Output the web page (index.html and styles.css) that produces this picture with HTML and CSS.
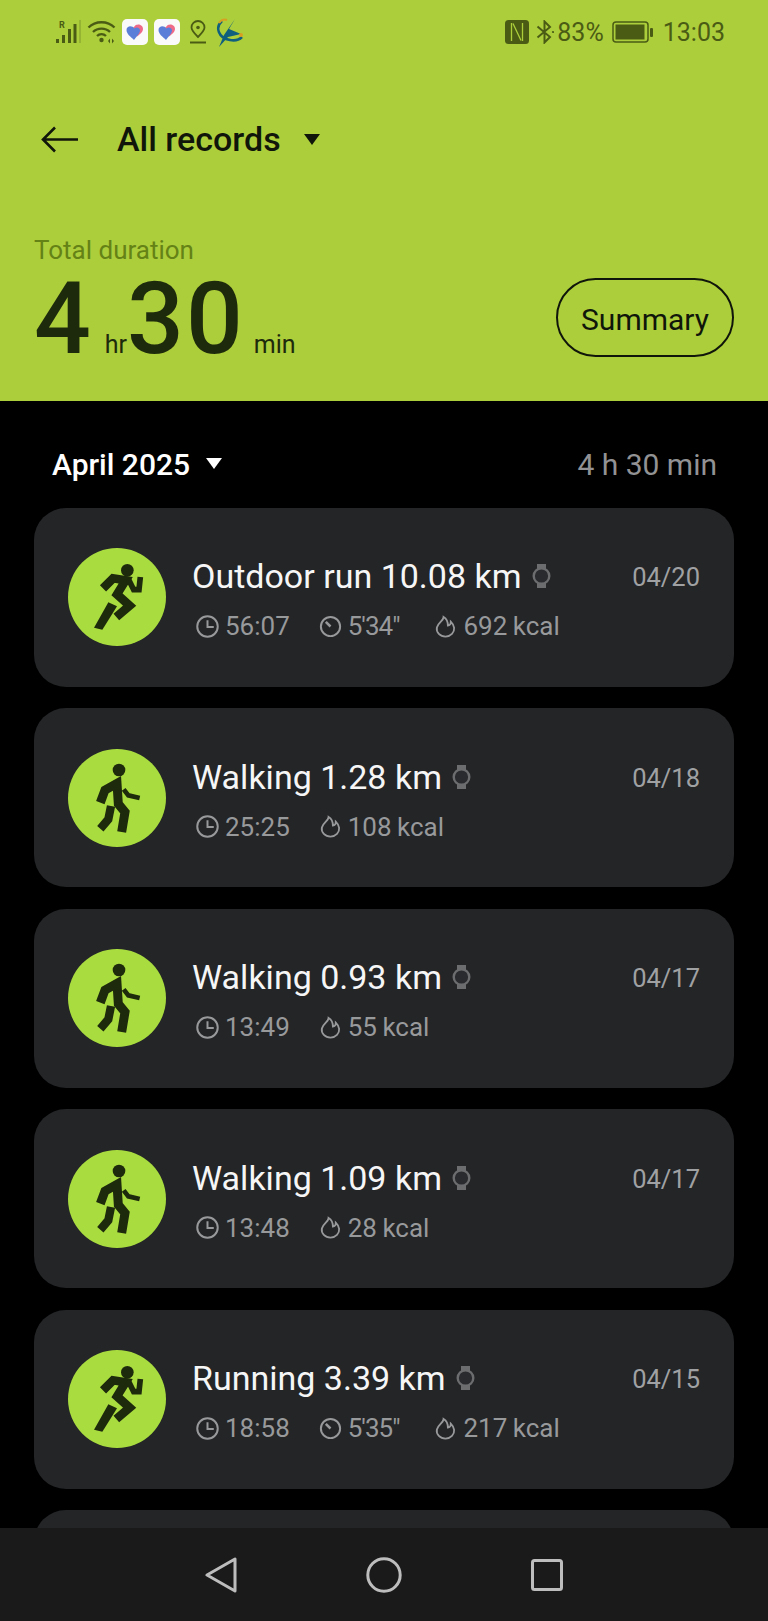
FILE: index.html
```html
<!DOCTYPE html>
<html lang="en">
<head>
  <meta charset="UTF-8">
  <meta name="viewport" content="width=device-width, initial-scale=1.0">
  <title>All records</title>
  <link rel="stylesheet" href="styles.css">
</head>
<body>
  <svg class="icon-defs" width="0" height="0">
    <symbol id="runner" viewBox="7 7 330 330">
      <circle cx="203" cy="92" r="19" fill="#1e2a0c"/>
      <g fill="none" stroke="#1e2a0c" stroke-width="26">
        <path d="M130 146 L160 116 L198 122 L172 164 L210 198 L170 232"/>
        <path d="M206 118 L222 150 L238 150 L242 112" stroke-width="17"/>
      </g>
      <path d="M146 188 L172 200 L128 270 L103 264 Z" fill="#1e2a0c"/>
    </symbol>
    <symbol id="walker" viewBox="7 7 330 330">
      <circle cx="178" cy="88" r="19" fill="#1e2a0c"/>
      <g fill="none" stroke="#1e2a0c" stroke-width="27">
        <path d="M122 186 L136 148 L172 128 L176 190 L196 214 L186 274"/>
        <path d="M192 146 L206 164 L240 172" stroke-width="14"/>
        <path d="M154 196 L146 236 L122 264" stroke-width="25"/>
      </g>
    </symbol>
    <symbol id="clock" viewBox="0 0 22 22">
      <circle cx="11" cy="11" r="9.8" fill="none" stroke="currentColor" stroke-width="1.900"/>
      <path d="M11 5 V11.5 H17" fill="none" stroke="currentColor" stroke-width="1.900"/>
    </symbol>
    <symbol id="pace" viewBox="0 0 22 22">
      <circle cx="11" cy="11" r="9.2" fill="none" stroke="currentColor" stroke-width="1.900"/>
      <path d="M6.5 6.5 L11 11" fill="none" stroke="currentColor" stroke-width="2.400"/>
    </symbol>
    <symbol id="flame" viewBox="0 0 22 24">
      <path d="M9 2 C9 6 3 8 2 13 C1 18 5.500 22.500 11 22.500 C16.500 22.500 20.500 18 20 13.500 C19.700 10.500 18 8.500 16.500 7 C16.500 9.500 15.500 11 13.500 11 C13.500 7.500 12.500 4 9 2 Z" fill="none" stroke="currentColor" stroke-width="1.900"/>
    </symbol>
    <symbol id="watch" viewBox="0 0 19 26">
      <path d="M5 1 H14 V6 H5 Z M5 20 H14 V25 H5 Z" fill="#6c6d6f"/>
      <circle cx="9.500" cy="13" r="7.800" fill="#2a2b2e" stroke="#6c6d6f" stroke-width="2.400"/>
    </symbol>
    <symbol id="heart-tile" viewBox="0 0 26 26">
      <rect width="26" height="26" rx="5" fill="#fafafa"/>
      <path d="M12 8 C14 4 21 5 21 10 C21 13 17.500 15.500 15 17.500 L10 10 Z" fill="#ee6a88"/>
      <path d="M4.500 11 C4.500 7 10 6 12.500 9.500 C14 7.500 18.500 8.500 18 12 C17.500 15 14 18 12 21 C9 18 4.500 15 4.500 11 Z" fill="#5b7fd9"/>
    </symbol>
  </svg>

  <div class="phone">
    <header class="top">
      <div class="status-bar">
        <div class="status-left">
          <svg width="26" height="26" viewBox="0 0 26 26">
            <text x="4" y="9" class="roam">R</text>
            <path d="M1 20 h3 v4 h-3 Z M7 16 h3 v8 h-3 Z M13 10 h3 v14 h-3 Z M18.500 5 h3 v19 h-3 Z" fill="#4a5c14"/>
            <path d="M25 1 V24" stroke="#7f9a2a" stroke-width="1"/>
          </svg>
          <svg width="29" height="26" viewBox="0 0 29 26">
            <path d="M1.500 8.500 C8.500 1.500 20.500 1.500 27.500 8.500 M6 13 C10.500 8.500 18.500 8.500 23 13 M10 17 C12.500 14.500 16.500 14.500 19 17" fill="none" stroke="#4a5c14" stroke-width="2.300"/>
            <circle cx="14.500" cy="21" r="2.200" fill="#4a5c14"/>
            <path d="M21 22 l2 -2.500 v5 Z M27 22 l-2 -2.500 v5 Z" fill="#4a5c14"/>
          </svg>
          <svg class="tile" width="26" height="26"><use href="#heart-tile"/></svg>
          <svg class="tile" width="26" height="26"><use href="#heart-tile"/></svg>
          <svg class="pin" width="16" height="24" viewBox="0 0 16 24">
            <path d="M8 17 C4 13 1.500 10.500 1.500 7.500 A6.500 6.500 0 0 1 14.500 7.500 C14.500 10.500 12 13 8 17 Z" fill="none" stroke="#4a5c14" stroke-width="1.800"/>
            <circle cx="8" cy="7.500" r="1.800" fill="#4a5c14"/>
            <path d="M0 22.500 H16" stroke="#4a5c14" stroke-width="2"/>
          </svg>
          <svg width="28" height="29" viewBox="0 0 28 29">
            <path d="M19 1 L13 11 L25 16 L12 19 L3 29 L8 17 Z" fill="#0f5f7e"/>
            <path d="M6 3 C-1 9 2 20 14 22 C19 23 23 22 26 19" fill="none" stroke="#0f5f7e" stroke-width="2.500"/>
            <path d="M3 5 C5 2 8 1 11 2" fill="none" stroke="#d8a021" stroke-width="2"/>
            <circle cx="25" cy="17" r="2" fill="#d8a021"/>
          </svg>
        </div>
        <div class="status-right">
          <svg width="24" height="24" viewBox="0 0 24 24">
            <rect width="24" height="24" rx="3.500" fill="#4a5c14"/>
            <path d="M6.500 3 V21 M17.500 3 V21 M8 3.500 L16 20.500" fill="none" stroke="#adce3b" stroke-width="1.300"/>
          </svg>
          <svg class="bt" width="18" height="24" viewBox="0 0 18 24">
            <path d="M1.500 6.500 L14 17 L8.500 22.500 V1.500 L14 7 L1.500 17.500" fill="none" stroke="#4a5c14" stroke-width="2"/>
            <circle cx="17" cy="12" r="1.100" fill="#4a5c14"/>
          </svg>
          <span class="pct">83%</span>
          <svg class="batt" width="41" height="22" viewBox="0 0 41 22">
            <rect x="1" y="1" width="35" height="20" rx="3" fill="none" stroke="#4a5c14" stroke-width="1.500"/>
            <rect x="3.500" y="3.500" width="29" height="15" fill="#4a5c14"/>
            <rect x="38" y="7" width="3" height="9" rx="1" fill="#4a5c14"/>
          </svg>
          <span class="clock-time">13:03</span>
        </div>
      </div>

      <div class="toolbar">
        <svg class="back" width="37" height="27" viewBox="0 0 37 27">
          <path d="M14 1.500 L2 13.500 L14 25.500 M2 13.500 H37" fill="none" stroke="#10160a" stroke-width="2.600"/>
        </svg>
        <h1>All records</h1>
        <span class="caret"></span>
      </div>

      <div class="total">
        <div>
          <div class="total-label">Total duration</div>
          <div class="total-value">
            <span class="big">4</span><span class="unit unit-hr">hr</span><span class="big">30</span><span class="unit unit-min">min</span>
          </div>
        </div>
        <button class="summary">Summary</button>
      </div>
    </header>

    <main class="records">
      <div class="month-row">
        <div class="month">April 2025<span class="caret caret-white"></span></div>
        <div class="month-total">4 h 30 min</div>
      </div>

      <!-- Outdoor run -->
      <div class="card">
        <svg class="sport" viewBox="0 0 330 330"><circle cx="165" cy="165" r="147" fill="#a9dd3f"/><use href="#runner"/></svg>
        <div class="card-body">
          <div class="card-head">
            <span class="card-title">Outdoor run 10.08 km</span>
            <svg class="watch"><use href="#watch"/></svg>
            <span class="card-date">04/20</span>
          </div>
          <div class="meta">
            <span class="meta-item"><svg class="ico"><use href="#clock"/></svg>56:07</span>
            <span class="meta-item meta-pace"><svg class="ico"><use href="#pace"/></svg>5'34"</span>
            <span class="meta-item"><svg class="ico"><use href="#flame"/></svg>692 kcal</span>
          </div>
        </div>
      </div>

      <!-- Walking -->
      <div class="card">
        <svg class="sport" viewBox="0 0 330 330"><circle cx="165" cy="165" r="147" fill="#a9dd3f"/><use href="#walker"/></svg>
        <div class="card-body">
          <div class="card-head">
            <span class="card-title">Walking 1.28 km</span>
            <svg class="watch"><use href="#watch"/></svg>
            <span class="card-date">04/18</span>
          </div>
          <div class="meta">
            <span class="meta-item"><svg class="ico"><use href="#clock"/></svg>25:25</span>
            <span class="meta-item"><svg class="ico"><use href="#flame"/></svg>108 kcal</span>
          </div>
        </div>
      </div>

      <div class="card">
        <svg class="sport" viewBox="0 0 330 330"><circle cx="165" cy="165" r="147" fill="#a9dd3f"/><use href="#walker"/></svg>
        <div class="card-body">
          <div class="card-head">
            <span class="card-title">Walking 0.93 km</span>
            <svg class="watch"><use href="#watch"/></svg>
            <span class="card-date">04/17</span>
          </div>
          <div class="meta">
            <span class="meta-item"><svg class="ico"><use href="#clock"/></svg>13:49</span>
            <span class="meta-item"><svg class="ico"><use href="#flame"/></svg>55 kcal</span>
          </div>
        </div>
      </div>

      <div class="card">
        <svg class="sport" viewBox="0 0 330 330"><circle cx="165" cy="165" r="147" fill="#a9dd3f"/><use href="#walker"/></svg>
        <div class="card-body">
          <div class="card-head">
            <span class="card-title">Walking 1.09 km</span>
            <svg class="watch"><use href="#watch"/></svg>
            <span class="card-date">04/17</span>
          </div>
          <div class="meta">
            <span class="meta-item"><svg class="ico"><use href="#clock"/></svg>13:48</span>
            <span class="meta-item"><svg class="ico"><use href="#flame"/></svg>28 kcal</span>
          </div>
        </div>
      </div>

      <!-- Running -->
      <div class="card">
        <svg class="sport" viewBox="0 0 330 330"><circle cx="165" cy="165" r="147" fill="#a9dd3f"/><use href="#runner"/></svg>
        <div class="card-body">
          <div class="card-head">
            <span class="card-title">Running 3.39 km</span>
            <svg class="watch"><use href="#watch"/></svg>
            <span class="card-date">04/15</span>
          </div>
          <div class="meta">
            <span class="meta-item"><svg class="ico"><use href="#clock"/></svg>18:58</span>
            <span class="meta-item meta-pace"><svg class="ico"><use href="#pace"/></svg>5'35"</span>
            <span class="meta-item"><svg class="ico"><use href="#flame"/></svg>217 kcal</span>
          </div>
        </div>
      </div>

      <!-- cut off by the nav bar -->
      <div class="card"></div>
    </main>

    <nav class="nav-bar">
      <svg width="32" height="36" viewBox="0 0 32 36">
        <path d="M30 2 V34 L2 18 Z" fill="none" stroke="#bdbdbd" stroke-width="3" stroke-linejoin="round"/>
      </svg>
      <svg width="36" height="36" viewBox="0 0 36 36">
        <circle cx="18" cy="18" r="16.200" fill="none" stroke="#bdbdbd" stroke-width="3"/>
      </svg>
      <svg width="32" height="32" viewBox="0 0 32 32">
        <rect x="1.500" y="1.500" width="29" height="29" rx="2" fill="none" stroke="#bdbdbd" stroke-width="3"/>
      </svg>
    </nav>
  </div>
</body>
</html>
```

FILE: styles.css
```css
* {
  box-sizing: border-box;
}

body {
  margin: 0;
  background: #000;
  font-family: Roboto, "Liberation Sans", sans-serif;
}

.icon-defs {
  position: absolute;
}

.phone {
  display: flex;
  flex-direction: column;
  height: 100vh;
  overflow: hidden;
}

/* green header */
.top {
  flex: none;
  height: 401px;
  background: #adce3b;
  padding: 0 34px;
}

.status-bar {
  display: flex;
  justify-content: space-between;
  align-items: center;
  height: 64px;
  padding: 0 9px 0 21px;
  color: #4a5c14;
  font-size: 25px;
}

.status-left,
.status-right {
  display: flex;
  align-items: center;
}

.status-left {
  gap: 6px;
}

.roam {
  font-size: 9px;
  font-weight: 700;
  fill: #4a5c14;
}

.pin {
  margin: 0 4px 0 4px;
}

.bt {
  margin-left: 7px;
}

.pct {
  margin-left: 3px;
}

.batt {
  margin-left: 8px;
}

.clock-time {
  margin-left: 10px;
}

.toolbar {
  display: flex;
  align-items: center;
  height: 70px;
  margin-top: 40px;
  padding-left: 7px;
}

.back {
  margin-right: 39px;
}

h1 {
  margin: 0;
  font-size: 34px;
  font-weight: 500;
  color: #10160a;
}

.caret {
  display: inline-block;
  margin-left: 23px;
  border-left: 8px solid transparent;
  border-right: 8px solid transparent;
  border-top: 11px solid #10160a;
}

.caret-white {
  margin-left: 16px;
  border-top-color: #fff;
  vertical-align: 6px;
}

.total {
  display: flex;
  justify-content: space-between;
  align-items: flex-end;
  margin-top: 61px;
}

.total-label {
  font-size: 26px;
  line-height: 30px;
  color: #648216;
}

.total-value {
  display: flex;
  align-items: baseline;
  height: 90px;
  line-height: 90px;
  margin-top: 9px;
  color: #1e2a0c;
}

.big {
  font-size: 100px;
  font-weight: 500;
  letter-spacing: 2px;
}

.unit {
  font-size: 25px;
}

.unit-hr {
  margin-left: 12px;
}

.unit-min {
  margin-left: 9px;
}

.summary {
  width: 178px;
  height: 79px;
  margin-bottom: 7px;
  padding-top: 4px;
  background: none;
  border: 2px solid #10160a;
  border-radius: 40px;
  font-family: inherit;
  font-size: 30px;
  color: #10160a;
}

/* records list */
.records {
  flex: 1;
  min-height: 0;
  overflow: hidden;
  padding: 0 34px;
}

.month-row {
  display: flex;
  justify-content: space-between;
  align-items: center;
  height: 106.7px;
  padding: 20px 17px 0 18px;
}

.month {
  font-size: 30px;
  font-weight: 500;
  color: #fff;
}

.month-total {
  font-size: 30px;
  color: #929294;
}

.card {
  display: flex;
  align-items: center;
  flex: none;
  height: 179px;
  margin-bottom: 21.5px;
  padding: 0 34px;
  background: #232527;
  border-radius: 32px;
}

.sport {
  flex: none;
  width: 110px;
  height: 110px;
  margin-left: -6px;
}

.card-body {
  flex: 1;
  margin-left: 20px;
  padding-top: 3px;
}

.card-head {
  display: flex;
  align-items: center;
  height: 40px;
}

.card-title {
  font-size: 34px;
  color: #f6f6f6;
}

.watch {
  width: 19px;
  height: 26px;
  margin-left: 10px;
}

.card-date {
  margin-left: auto;
  padding-top: 2px;
  font-size: 25.500px;
  color: #a0a1a3;
}

.meta {
  display: flex;
  gap: 29px;
  margin-top: 15px;
  padding-left: 4px;
  font-size: 26px;
  line-height: 30px;
  word-spacing: -1px;
  color: #98999b;
}

.meta-item {
  display: flex;
  align-items: center;
  gap: 6px;
}

.meta-pace {
  margin-right: 6px;
  letter-spacing: -1px;
}

.ico {
  width: 23px;
  height: 23px;
}

.nav-bar {
  flex: none;
  display: flex;
  justify-content: center;
  align-items: center;
  gap: 129px;
  height: 93px;
  background: #1a1a1a;
}
```
